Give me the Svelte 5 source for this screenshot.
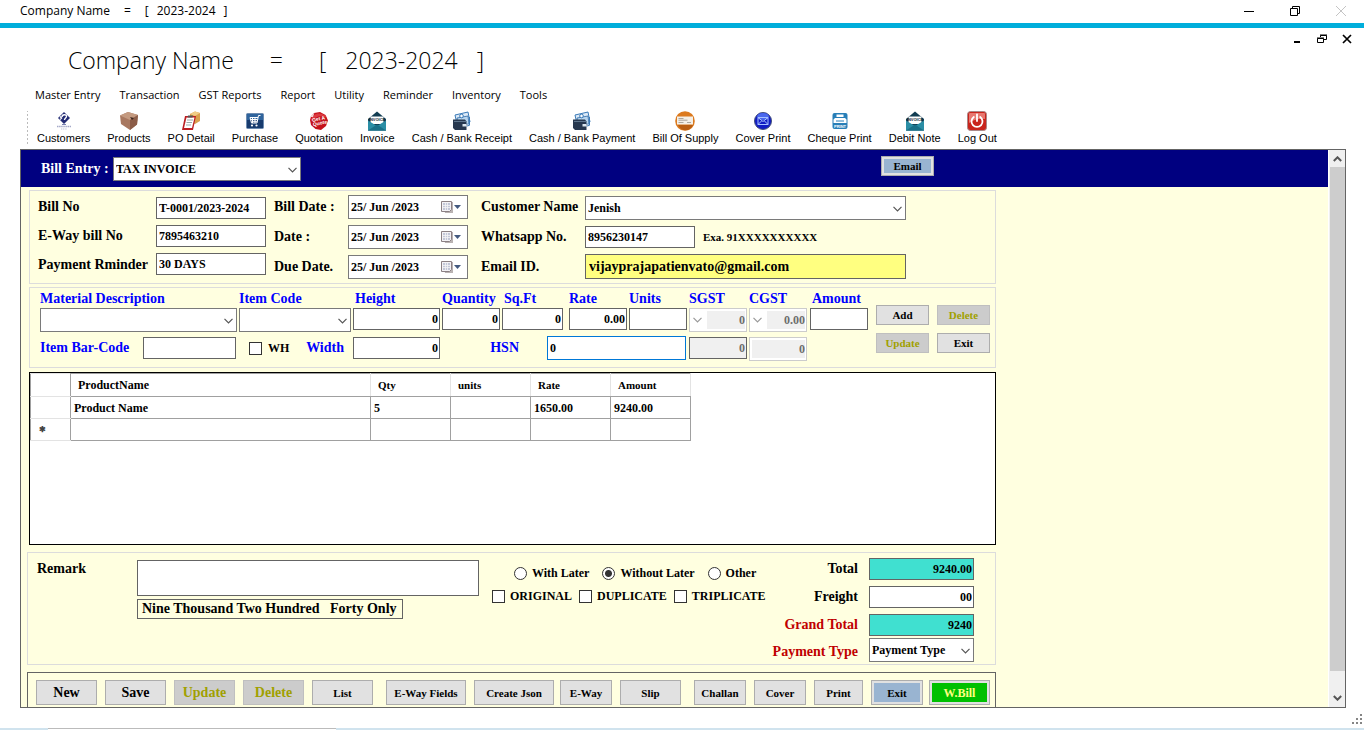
<script>
  const menus = ['Master Entry', 'Transaction', 'GST Reports', 'Report', 'Utility', 'Reminder', 'Inventory', 'Tools'];
  const tools = [
    ['Customers', 'customers'], ['Products', 'box'], ['PO Detail', 'po'], ['Purchase', 'cart'],
    ['Quotation', 'quote'], ['Invoice', 'invoice'], ['Cash / Bank Receipt', 'cash'],
    ['Cash / Bank Payment', 'cash'], ['Bill Of Supply', 'supply'], ['Cover Print', 'cover'],
    ['Cheque Print', 'print'], ['Debit Note', 'invoice'], ['Log Out', 'power']
  ];
  const rows = [
    { mark: '', name: 'Product Name', qty: '5', units: '', rate: '1650.00', amount: '9240.00' },
    { mark: '✱', name: '', qty: '', units: '', rate: '', amount: '' }
  ];
  let later = $state('Without Later');
</script>

{#snippet chevron()}
  <svg class="chev" viewBox="0 0 9 6" width="9" height="6" aria-hidden="true"><path d="M.5 .8 4.5 4.8 8.5 .8" fill="none" stroke="currentColor" stroke-width="1.2" /></svg>
{/snippet}

{#snippet combo(id, value, cls)}
  <div class="combo {cls}">
    <select {id}><option>{value}</option></select>
    {@render chevron()}
  </div>
{/snippet}

{#snippet date(id)}
  <div class="date">
    <input {id} value="25/ Jun /2023" />
    <svg viewBox="0 0 22 14" width="22" height="14" aria-hidden="true">
      <path d="M3 2h10v11H5z" fill="#b9b2b2" />
      <path d="M1.500 1.500h10v8l-2 2h-8z" fill="#f4f2f5" stroke="#8b8084" />
      <path d="M3 3h7v7H3z" fill="#c3c7d8" />
      <path d="M3 5.500h7M3 7.500h7M5.500 3v7M7.500 3v7" stroke="#f4f2f5" stroke-width=".8" />
      <path d="M14 5h7l-3.500 4z" fill="#44597f" />
    </svg>
  </div>
{/snippet}

{#snippet icon(kind)}
  <svg viewBox="0 0 20 20" width="20" height="20" aria-hidden="true">
    {#if kind === 'customers'}
      <path d="M10 1 16 7l-6 6-6-6z" fill="#232c74" />
      <path d="M8 6c0-3 5-3 4.500-.5C12.300 7 10.500 7 10.500 9M6 5.500 7.500 7 6 8.500" fill="none" stroke="#fff" stroke-width="1.400" />
      <path d="M8 13.500h4" stroke="#777fb0" />
      <path d="M3 15.500h14" stroke="#a4a9c8" stroke-width="1.300" stroke-dasharray="1.500 .6" />
      <path d="M7 18h6" stroke="#c3c7dc" stroke-width="1.200" stroke-dasharray="1.200 .6" />
    {:else if kind === 'box'}
      <path d="M1 4.500 9 1l10 3-1 9.500L11 19 2 13z" fill="#a87860" />
      <path d="M1 4.500 9 1l10 3-8 5z" fill="#c49a80" />
      <path d="M11 9 19 4l-1 9.500L11 19z" fill="#8c5d48" />
      <path d="m11 6 4 1-2 2z" fill="#3a241c" />
    {:else if kind === 'po'}
      <path d="m9 3 5-2.500 5 1.500v8l-5 3-5-2z" fill="#d9a04e" />
      <path d="m9 3 5-2.500 5 1.500-5 3z" fill="#f1cd86" />
      <path d="M4 5h11l-3 14H1z" fill="#bb1e22" />
      <path d="M5.500 6.500h8L11 17H3z" fill="#fff" />
      <path d="M7 4.500h5l-.5 2h-5z" fill="#555" />
      <path d="M6 9h6M5.500 11.500h5.500M5 14h5" stroke="#9aa" />
    {:else if kind === 'cart'}
      <rect x="1.500" y="2.500" width="17" height="15" rx="1" fill="#173b6e" stroke="#6c8bb0" />
      <path d="M2 3h16v6H2z" fill="#2f649d" />
      <path d="M15.500 4.500h-2L12 12H6.500L5 6.500h8M6 8.500h6.500M6.500 10.300H12M7.500 6.500v5.500M10 6.500v5.500" fill="none" stroke="#fff" />
      <circle cx="7" cy="14.500" r="1.100" fill="#fff" /><circle cx="11.500" cy="14.500" r="1.100" fill="#fff" />
    {:else if kind === 'quote'}
      <path d="M2 5.500 5 2l6-1 5.500 3L19 9.500 17 15l-5 4-5.500-1L2 14 1 9z" fill="#c5121b" />
      <path d="M2 10C2 1 15 0 18 7c-5-3-11-2-16 3" fill="#dc3a40" />
      <path d="m1 6 4.500-4.500L4 6z" fill="#f1d7d7" />
      <text x="10" y="9.500" transform="rotate(-12 10 10)">Get A</text>
      <text x="10.500" y="14" transform="rotate(-12 10 10)">Quote</text>
    {:else if kind === 'invoice'}
      <path d="m1 8 9-7.500L19 8v11.500H1z" fill="#123d52" />
      <path d="M3.500 5.500h13V13h-13z" fill="#fff" />
      <text x="10" y="10" class="dark">INVOICE</text>
      <path d="M1 9.500 10 15l9-5.500v10H1z" fill="#2b8ea5" />
      <path d="m1 19.500 9-6 9 6z" fill="#1a7088" />
    {:else if kind === 'cash'}
      <path d="m3 4 13-3 2 10-13 2z" fill="#dceaf7" stroke="#3a7ab8" />
      <path d="m5 7 11-2 1 8-11 1z" fill="#b9d6ef" stroke="#2f6aa5" stroke-width=".8" />
      <circle cx="9.500" cy="5" r="1.800" fill="#fff" stroke="#3a7ab8" />
      <path d="M1 8.500h12l1.500 2V19H3l-2-2z" fill="#27384f" />
      <path d="M2 10.500h12" stroke="#7890a8" stroke-width=".7" />
      <path d="M10.500 13h4v2.500h-4z" fill="#dce6ef" />
      <path d="m15 15 2.500-.7V6" fill="none" stroke="#3a7ab8" />
    {:else if kind === 'supply'}
      <circle cx="10" cy="10" r="9.800" fill="#dc7a1e" />
      <path d="M3 14h15c-3 7-12 7-15 0" fill="#b95e12" />
      <path d="M2 5.500h16v8H2z" fill="#f4efe7" />
      <path d="M3.500 7.500h5M3.500 9.200h9M3.500 11.500h5M12 11.500h4" stroke="#9b9389" stroke-width=".8" />
    {:else if kind === 'cover'}
      <circle cx="10" cy="10" r="8.500" fill="#101cc4" stroke="#44507a" />
      <ellipse cx="10" cy="5.500" rx="6" ry="3.500" fill="#4a68ee" />
      <path d="M5 6.500h10v7H5zl5 4 5-4M5 13.500l3.500-3.500M15 13.500 11.500 10" fill="none" stroke="#a6c0ff" />
    {:else if kind === 'print'}
      <rect x="2.500" y="2" width="15" height="16" rx="2" fill="#287fb8" />
      <path d="M6.500 3.500h7V6h-7zM5 7h10l1.500 1.500V12h-13V8.500z" fill="#fff" />
      <path d="M6 10h8" stroke="#287fb8" />
      <text x="10" y="16.800" class="white">PRINT</text>
    {:else}
      <rect x=".5" y=".5" width="19" height="19" rx="3" fill="#c9241c" stroke="#a88" />
      <path d="M2 3q0-1 1-1h14q1 0 1 1v5Q10 7 2 12z" fill="#e87870" />
      <path d="M6.800 6A5.500 5.500 0 1 0 13.200 6" fill="none" stroke="#fff" stroke-width="1.800" stroke-linecap="round" />
      <path d="M10 3.500V10" stroke="#fff" stroke-width="1.800" stroke-linecap="round" />
    {/if}
  </svg>
{/snippet}

<div class="window">
  <header class="titlebar">
    <div class="caption"><span>Company Name</span><span>=</span><span class="brk">[</span><span class="brk">2023-2024</span><span>]</span></div>
    <div class="controls">
      <button aria-label="Minimize"><svg viewBox="0 0 12 12" width="12" height="12"><path d="M1 6.500h10" stroke="#000" /></svg></button>
      <button aria-label="Restore"><svg viewBox="0 0 12 12" width="12" height="12" fill="none" stroke="#000"><path d="M1.500 3.500h7v7h-7zM3.500 3.500v-2h7v7h-2" /></svg></button>
      <button aria-label="Close"><svg viewBox="0 0 12 12" width="12" height="12"><path d="m1 1 10 10M11 1 1 11" stroke="#c4c4c4" /></svg></button>
    </div>
  </header>

  <div class="mdi">
    <button aria-label="Minimize form"><svg viewBox="0 0 12 12" width="12" height="12"><path d="M3 9h6" stroke="#000" stroke-width="2" /></svg></button>
    <button aria-label="Restore form"><svg viewBox="0 0 12 12" width="12" height="12" fill="none" stroke="#000"><path d="M1.500 5.500h6v4h-6zM1 5h7M4.500 4V2.500h6v4H8M4 2h7" /></svg></button>
    <button aria-label="Close form"><svg viewBox="0 0 12 12" width="12" height="12"><path d="m2 2 8 8M10 2l-8 8" stroke="#000" stroke-width="1.700" /></svg></button>
  </div>

  <h1><span>Company Name</span><span>=</span><span class="brk">[</span><span class="brk">2023-2024</span><span>]</span></h1>

  <nav class="menus">
    {#each menus as m}<button>{m}</button>{/each}
  </nav>

  <div class="toolbar">
    {#each tools as [label, kind]}
      <button>{@render icon(kind)}<span>{label}</span></button>
    {/each}
  </div>

  <main class="frame">
    <div class="form">
      <div class="banner">
        <label for="entry">Bill Entry :</label>
        {@render combo('entry', 'TAX INVOICE', 'entry')}
        <button class="btn blue email">Email</button>
      </div>

      <section class="panel bill">
        <div class="labels">
          <label for="billno">Bill No</label><label for="eway">E-Way bill No</label><label for="rem">Payment Rminder</label>
        </div>
        <div class="stack">
          <input id="billno" value="T-0001/2023-2024" />
          <input id="eway" value="7895463210" />
          <input id="rem" value="30 DAYS" />
        </div>
        <div class="labels">
          <label for="d1">Bill Date :</label><label for="d2">Date :</label><label for="d3">Due Date.</label>
        </div>
        <div class="stack">{@render date('d1')}{@render date('d2')}{@render date('d3')}</div>
        <div class="labels inset">
          <label for="cust">Customer Name</label><label for="wa">Whatsapp No.</label><label for="mail">Email ID.</label>
        </div>
        <div class="stack">
          {@render combo('cust', 'Jenish', 'small')}
          <div class="inline"><input id="wa" class="wa" value="8956230147" /><span class="hint">Exa. 91XXXXXXXXXX</span></div>
          <input id="mail" class="mail" value="vijayprajapatienvato@gmail.com" />
        </div>
      </section>

      <section class="panel item">
        <div class="grid">
          <div class="field"><label for="mat">Material Description</label>{@render combo('mat', '', '')}</div>
          <div class="field"><label for="code">Item Code</label>{@render combo('code', '', '')}</div>
          <div class="field nudge"><label for="h">Height</label><input id="h" class="num" value="0" /></div>
          <div class="field"><label for="q">Quantity</label><input id="q" class="num" value="0" /></div>
          <div class="field nudge sq"><label for="sq">Sq.Ft</label><input id="sq" class="num" value="0" /></div>
          <div class="field"><label for="rate">Rate</label><input id="rate" class="num" value="0.00" /></div>
          <div class="field"><label for="un">Units</label><input id="un" /></div>
          <div class="field"><label for="sg">SGST</label><div class="tax">{@render chevron()}<input id="sg" disabled value="0" /></div></div>
          <div class="field"><label for="cg">CGST</label><div class="tax">{@render chevron()}<input id="cg" disabled value="0.00" /></div></div>
          <div class="field nudge"><label for="am">Amount</label><input id="am" /></div>

          <div class="inline between"><label for="bar">Item Bar-Code</label><input id="bar" class="bar" /></div>
          <div class="inline between wh"><label class="check"><input type="checkbox" />WH</label><label for="w">Width</label></div>
          <input id="w" class="num" value="0" />
          <div class="inline hsn"><label for="hsn">HSN</label><input id="hsn" value="0" /></div>
          <input class="num grey" aria-label="SGST amount" disabled value="0" />
          <div class="tax full"><input aria-label="CGST amount" disabled value="0" /></div>
        </div>
        <div class="actions">
          <button class="btn">Add</button><button class="btn" disabled>Delete</button>
          <button class="btn" disabled>Update</button><button class="btn">Exit</button>
        </div>
      </section>

      <section class="sheet">
        <table>
          <thead><tr><th class="mark" aria-label="Row"></th><th class="name">ProductName</th><th>Qty</th><th>units</th><th>Rate</th><th>Amount</th></tr></thead>
          <tbody>
            {#each rows as r}
              <tr><td class="mark">{r.mark}</td><td>{r.name}</td><td>{r.qty}</td><td>{r.units}</td><td>{r.rate}</td><td>{r.amount}</td></tr>
            {/each}
          </tbody>
        </table>
      </section>

      <section class="panel wide totals">
        <label for="remark" class="remark">Remark</label>
        <div class="notes">
          <textarea id="remark"></textarea>
          <output>Nine Thousand Two Hundred&nbsp;&nbsp; Forty Only</output>
        </div>
        <div class="options">
          <div class="radios">
            {#each ['With Later', 'Without Later', 'Other'] as o}
              <label><input type="radio" name="later" value={o} bind:group={later} />{o}</label>
            {/each}
          </div>
          <div class="copies">
            {#each ['ORIGINAL', 'DUPLICATE', 'TRIPLICATE'] as c}
              <label><input type="checkbox" />{c}</label>
            {/each}
          </div>
        </div>
        <div class="sums">
          <label for="tot">Total</label><input id="tot" class="num teal" value="9240.00" />
          <label for="fr">Freight</label><input id="fr" class="num" value="00" />
          <label for="gt" class="red">Grand Total</label><input id="gt" class="num teal" value="9240" />
          <label for="pt" class="red">Payment Type</label>{@render combo('pt', 'Payment Type', 'small')}
        </div>
      </section>

      <footer class="commands">
        <div class="group big">
          <button class="btn">New</button><button class="btn">Save</button><button class="btn" disabled>Update</button><button class="btn" disabled>Delete</button>
        </div>
        <button class="btn w61">List</button>
        <div class="group sep"><button class="btn w80">E-Way Fields</button><button class="btn w80">Create Json</button></div>
        <div class="group"><button class="btn">E-Way</button><button class="btn w61">Slip</button></div>
        <div class="group sep"><button class="btn">Challan</button><button class="btn">Cover</button><button class="btn w49">Print</button><button class="btn blue">Exit</button></div>
        <button class="btn green w61">W.Bill</button>
      </footer>
    </div>
    <div class="scroll" aria-hidden="true">
      <svg viewBox="0 0 9 6" width="9" height="6"><path d="M.8 5 4.500 1.300 8.200 5" fill="none" stroke="#555" stroke-width="2" /></svg>
      <i></i>
      <svg viewBox="0 0 9 6" width="9" height="6"><path d="M.8 1 4.500 4.700 8.200 1" fill="none" stroke="#555" stroke-width="2" /></svg>
    </div>
  </main>

  <div class="status">
    <svg viewBox="0 0 10 10" width="10" height="10" fill="#858585" aria-hidden="true"><path d="M8 0h2v2H8zM4 4h2v2H4zM8 4h2v2H8zM0 8h2v2H0zM4 8h2v2H4zM8 8h2v2H8z" /></svg>
  </div>
  <div class="taskbar"><i></i></div>
</div>

<style>
  :global(body) { margin: 0; background: #fff; }
  .window { min-height: 100vh; display: flex; flex-direction: column; font: 11px/16px "Open Sans", "Noto Sans", sans-serif; color: #000; overflow: hidden; }
  .window, .window * { box-sizing: border-box; }
  button, input, select, textarea { font: inherit; color: inherit; margin: 0; border-radius: 0; outline: none; }
  button { padding: 0; border: 0; background: none; white-space: nowrap; }
  svg { display: block; flex: none; }

  .titlebar { height: 28px; border-bottom: 5px solid #00aedb; display: flex; justify-content: space-between; align-items: center; padding: 0 17px 2px 20px; }
  .caption { display: flex; gap: 14px; font-size: 12px; }
  .caption .brk { margin-right: -6px; }
  .controls { display: flex; gap: 34px; }
  .mdi { display: flex; justify-content: flex-end; gap: 13px; padding: 5px 11px 0 0; }
  h1 { margin: 0; padding: 0 68px; display: flex; gap: 36px; font-size: 23px; font-weight: 300; line-height: 30px; }
  h1 .brk { margin-right: -17px; }
  .menus { display: flex; gap: 19px; padding: 12px 35px 0; }
  .toolbar { display: flex; gap: 17px; margin: 8px 26px 4px; padding-left: 11px; background: radial-gradient(circle, #bbb 1px, transparent 1px) 0 2px / 3px 4px repeat-y; font: 11px/14px "Liberation Sans", Arial, sans-serif; }
  .toolbar button { display: flex; flex-direction: column; align-items: center; }
  .toolbar text { font: bold 5px "Liberation Sans", sans-serif; fill: #fff; text-anchor: middle; }
  .toolbar text.dark { font-size: 4px; fill: #123; }
  .toolbar text.white { font-size: 4px; }

  .frame { margin: 0 18px 0 20px; border: 1px solid #646464; display: flex; background: #ffffe0; font: bold 12px/16px "Liberation Serif", "Times New Roman", serif; }
  .form { flex: 1; min-width: 0; display: flex; flex-direction: column; }
  .form label { font-size: 14px; white-space: nowrap; }
  .form input:not([type]), textarea { border: 1px solid #646464; background: #fff; padding: 0 2px; height: 22px; width: 100%; min-width: 0; }
  .form input.num:not([type]) { text-align: right; padding: 0 1px; }
  .form input.teal:not([type]) { background: #40e0d0; }
  .banner { background: #000080; height: 37px; padding-left: 20px; display: flex; align-items: center; }
  .banner label { color: #fff; width: 72px; }
  .combo { position: relative; height: 24px; color: #555; }
  .combo select { appearance: none; display: block; width: 100%; height: 100%; border: 1px solid #7a7a7a; background: #fff; color: #000; padding: 0 2px; }
  .combo .chev { position: absolute; right: 4px; top: 50%; margin-top: -2px; pointer-events: none; }
  .entry { width: 188px; }

  .btn { border: 1px solid #adadad; background: #e1e1e1; font-size: 11px; width: 53px; height: 20px; }
  .btn:disabled { background: #ccc; border-color: #bfbfbf; color: #a0a000; }
  .btn.blue, .btn.green { background: #99b4d1; box-shadow: inset 0 0 0 2px #e1e1e1; }
  .btn.green { background: #00c000; color: #ffff80; font-size: 12px; }
  .email { margin: 0 0 5px 580px; }

  .panel { width: 967px; margin: 3px 0 0 8px; border: 1px solid #dcdcdc; display: flex; }
  .panel.wide { width: 969px; margin: 7px 0 0 6px; }
  .bill { height: 94px; padding: 4px 0 0 8px; gap: 8px; }
  .labels { display: flex; flex-direction: column; gap: 7px; line-height: 23px; width: 66px; }
  .labels:first-child { width: 110px; gap: 6px; }
  .labels.inset { width: 101px; padding-left: 5px; }
  .stack { display: flex; flex-direction: column; gap: 6px; width: 110px; padding-top: 2px; }
  .labels + .stack:nth-child(4) { width: 120px; padding-top: 0; }
  .stack:last-child { width: 321px; padding-top: 1px; }
  .date { height: 24px; border: 1px solid #7a7a7a; background: #fff; display: flex; align-items: center; padding-right: 5px; }
  .form .date input:not([type]) { border: 0; }
  .inline { display: flex; align-items: center; gap: 8px; }
  .hint { font-size: 11px; }
  .form input.wa:not([type]) { width: 110px; }
  .form input.mail:not([type]) { background: #ffff80; height: 25px; font-size: 14px; padding: 0 3px; }

  .item { height: 81px; padding: 0 5px 0 10px; justify-content: space-between; }
  .grid { display: grid; grid-template-columns: 197px 112px 87px 58px 65px 58px 58px 58px 59px 58px; grid-template-rows: 44px 22px; column-gap: 2px; row-gap: 5px; }
  .grid label { color: #00f; }
  .field { display: flex; flex-direction: column; padding-top: 2px; }
  .field label { line-height: 18px; }
  .nudge label { padding-left: 2px; }
  .sq input { max-width: 61px; }
  .tax { display: flex; align-items: center; height: 24px; border: 1px solid #ccc; background: #fff; padding: 2px 1px 2px 3px; gap: 5px; color: #999; width: 58px; }
  .form .tax input:not([type]) { border: 0; height: 18px; background: #f0f0f0; color: #6d6d6d; text-align: right; padding: 0; }
  .tax.full { padding-left: 2px; }
  .between { justify-content: space-between; }
  .form input.bar:not([type]) { width: 93px; margin-right: 1px; }
  .wh { padding: 0 7px 0 10px; }
  .check { display: flex; align-items: center; gap: 6px; }
  .form .grid .check { color: #000; font-size: 12px; }
  .hsn { grid-column: span 4; justify-content: flex-end; gap: 28px; }
  .form .hsn input:not([type]) { width: 139px; height: 24px; border-color: #0078d7; margin-right: 1px; }
  .form input.grey:not([type]) { background: #f0f0f0; color: #6d6d6d; }
  .actions { display: grid; grid-template-columns: 53px 53px; gap: 8px; align-content: start; padding-top: 17px; }

  .sheet { width: 967px; height: 173px; margin: 4px 0 0 8px; border: 1px solid #000; background: #fff; }
  table { border-collapse: collapse; table-layout: fixed; width: 661px; font-size: 12px; }
  th, td { border: 1px solid #a0a0a0; text-align: left; height: 22px; padding: 0 3px; width: 80px; }
  th { border-color: #a0a0a0 #e3e3e3; padding: 0 7px; font-size: 11px; height: 23px; }
  th.name { width: 300px; font-size: 12px; }
  .mark { width: 40px; padding-left: 8px; font-size: 8px; color: #444; border-color: #e3e3e3 #a0a0a0; }

  .totals { height: 113px; padding-left: 9px; }
  .remark { width: 100px; padding-top: 8px; }
  .notes { width: 342px; padding-top: 7px; display: flex; flex-direction: column; align-items: flex-start; gap: 3px; }
  .notes textarea { height: 36px; resize: none; display: block; }
  output { border: 1px solid #646464; font-size: 14px; line-height: 18px; padding: 0 5px 0 4px; }
  .options { padding: 12px 0 0 13px; width: 291px; }
  .form .options label { display: flex; align-items: center; gap: 5px; font-size: 12px; }
  .radios { display: flex; gap: 13px; padding-left: 22px; }
  .copies { display: flex; gap: 7px; padding-top: 7px; }
  input[type='checkbox'], input[type='radio'] { appearance: none; width: 13px; height: 13px; border: 1px solid #333; background: #fff; flex: none; }
  input[type='radio'] { border-radius: 50%; }
  input[type='radio']:checked { background: radial-gradient(circle, #333 3px, #fff 4px); }
  .sums { display: grid; grid-template-columns: 88px 105px; column-gap: 11px; row-gap: 6px; padding-top: 5px; align-content: start; align-items: center; text-align: right; }
  .sums .combo { margin-top: -4px; text-align: left; }
  .red { color: #c00000; }

  .commands { width: 969px; margin: 7px 0 0 6px; border: 1px solid #646464; border-bottom: 0; height: 35px; padding: 7px 0 0 8px; display: flex; gap: 6px; }
  .commands .btn { height: 25px; width: 52px; }
  .group { display: flex; gap: 8px; }
  .big { margin-right: 2px; }
  .commands .big .btn { width: 61px; font-size: 14px; }
  .sep { margin-left: 7px; }
  .commands .w61 { width: 61px; }
  .commands .w80 { width: 80px; }
  .commands .w49 { width: 49px; }

  .scroll { width: 17px; border-left: 1px solid #fff; background: #f0f0f0; display: flex; flex-direction: column; align-items: center; padding: 6px 0; }
  .scroll i { flex: 1; width: 15px; background: #cdcdcd; margin: 5px 0 24px; }
  .status { flex: 1; min-height: 20px; display: flex; justify-content: flex-end; padding: 6px 2px 0 0; }
  .taskbar { height: 2px; background: #d0e3ee; padding-left: 48px; }
  .taskbar i { display: block; width: 288px; height: 2px; background: #fff; border-top: 1px solid #bbb; }
</style>
